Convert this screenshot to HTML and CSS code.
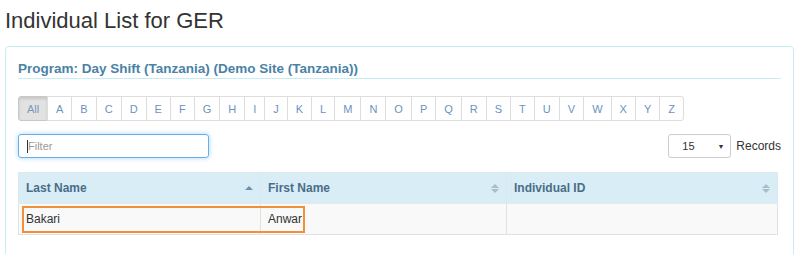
FILE: index.html
```html
<!DOCTYPE html>
<html>
<head>
<meta charset="utf-8">
<link rel="stylesheet" href="styles.css">
</head>
<body>
<div class="page">
  <h1 class="title">Individual List for GER</h1>
  <div class="panel">
    <h2 class="program">Program: Day Shift (Tanzania) (Demo Site (Tanzania))</h2>
    <div class="alpha">
      <span class="letter active">All</span><span class="letter">A</span><span class="letter">B</span><span class="letter">C</span><span class="letter">D</span><span class="letter">E</span><span class="letter">F</span><span class="letter">G</span><span class="letter">H</span><span class="letter">I</span><span class="letter">J</span><span class="letter">K</span><span class="letter">L</span><span class="letter">M</span><span class="letter">N</span><span class="letter">O</span><span class="letter">P</span><span class="letter">Q</span><span class="letter">R</span><span class="letter">S</span><span class="letter">T</span><span class="letter">U</span><span class="letter">V</span><span class="letter">W</span><span class="letter">X</span><span class="letter">Y</span><span class="letter">Z</span>
    </div>
    <div class="controls">
      <div class="filter"><span class="caret"></span><span class="placeholder">Filter</span></div>
      <div class="records">
        <div class="select"><span>15</span><span class="arrow">&#9660;</span></div>
        <span class="rec-label">Records</span>
      </div>
    </div>
    <div class="table-wrap">
      <table class="grid">
        <thead>
          <tr>
            <th class="c1"><div class="th-in"><span>Last Name</span><span class="sort-asc"></span></div></th>
            <th class="c2"><div class="th-in"><span>First Name</span><span class="sort-both"><i class="up"></i><i class="down"></i></span></div></th>
            <th class="c3"><div class="th-in"><span>Individual ID</span><span class="sort-both"><i class="up"></i><i class="down"></i></span></div></th>
          </tr>
        </thead>
        <tbody>
          <tr>
            <td>Bakari</td>
            <td>Anwar</td>
            <td></td>
          </tr>
        </tbody>
      </table>
      <div class="highlight"></div>
    </div>
  </div>
</div>
</body>
</html>
```

FILE: styles.css
```css
html, body {
  margin: 0;
  padding: 0;
  background: #ffffff;
  font-family: "Liberation Sans", Arial, sans-serif;
  color: #333333;
}

.page {
  padding: 0 6px 0 5px;
}

.title {
  margin: 8px 0 12px 0;
  font-size: 22px;
  line-height: 26px;
  font-weight: normal;
  color: #333333;
}

.panel {
  border: 1px solid #c6ecf4;
  border-radius: 4px;
  padding: 13px 12px 30px 12px;
  height: 220px;
  box-sizing: border-box;
}

.program {
  margin: 0;
  font-size: 13.5px;
  line-height: 17px;
  font-weight: bold;
  color: #4a82a6;
  padding-bottom: 1px;
  border-bottom: 1px solid #c6ecf4;
}

.alpha {
  margin-top: 17px;
  display: flex;
  height: 25px;
}

.letter {
  display: flex;
  align-items: center;
  justify-content: center;
  padding: 0 8px;
  min-width: 7px;
  height: 25px;
  box-sizing: border-box;
  border: 1px solid #dddddd;
  margin-left: -1px;
  font-size: 11px;
  color: #6b93bf;
  background: #ffffff;
}

.letter:first-child {
  margin-left: 0;
  border-radius: 3px 0 0 3px;
}

.letter:last-child {
  border-radius: 0 3px 3px 0;
}

.letter.active {
  background: #e2e2e2;
  border-color: #c8c8c8;
  box-shadow: inset 0 2px 3px rgba(0, 0, 0, 0.12);
  color: #7b97b8;
  padding: 0 6px;
  width: 30px;
}

.controls {
  margin-top: 13px;
  display: flex;
  justify-content: space-between;
  align-items: center;
  height: 24px;
}

.filter {
  width: 191px;
  height: 24px;
  box-sizing: border-box;
  border: 1px solid #66afe9;
  border-radius: 3px;
  box-shadow: 0 0 5px rgba(102, 175, 233, 0.55);
  display: flex;
  align-items: center;
  padding-left: 8px;
  font-size: 11px;
}

.caret {
  width: 1px;
  height: 13px;
  background: #333333;
}

.placeholder {
  color: #9a9a9a;
}

.records {
  display: flex;
  align-items: center;
  margin-right: 0;
}

.select {
  width: 63px;
  height: 24px;
  box-sizing: border-box;
  border: 1px solid #cccccc;
  border-radius: 3px;
  display: flex;
  align-items: center;
  justify-content: space-between;
  padding: 0 6px 0 13px;
  font-size: 11px;
  color: #333333;
}

.arrow {
  font-size: 7px;
  color: #333333;
}

.rec-label {
  margin-left: 5px;
  font-size: 12px;
  color: #333333;
}

.table-wrap {
  position: relative;
  margin-top: 14px;
  width: 759px;
}

.grid {
  border-collapse: collapse;
  width: 759px;
  table-layout: fixed;
  font-size: 12px;
}

.grid th, .grid td {
  border: 1px solid #e2e2e2;
  height: 31px;
  box-sizing: border-box;
  padding: 0 7px;
  text-align: left;
  vertical-align: middle;
}

.grid th {
  background: #d9edf7;
  color: #4a6d88;
  font-weight: bold;
  border-color: #dce7ee;
  border-bottom-color: #e4e9ec;
}

.grid th .th-in {
  display: flex;
  justify-content: space-between;
  align-items: center;
  height: 22px;
}

.grid td {
  background: #f9f9f9;
  color: #333333;
}

.c1 { width: 242px; }
.c2 { width: 246px; }
.c3 { width: 271px; }

.sort-asc {
  width: 0;
  height: 0;
  border-left: 4px solid transparent;
  border-right: 4px solid transparent;
  border-bottom: 4px solid #6e90a8;
}

.sort-both {
  display: flex;
  flex-direction: column;
  gap: 1px;
}

.sort-both i {
  display: block;
  width: 0;
  height: 0;
  border-left: 4px solid transparent;
  border-right: 4px solid transparent;
}

.sort-both .up {
  border-bottom: 4px solid #a8bccb;
}

.sort-both .down {
  border-top: 4px solid #a8bccb;
}

.highlight {
  position: absolute;
  left: 4px;
  top: 34px;
  width: 283px;
  height: 27px;
  box-sizing: border-box;
  border: 2px solid #f0913a;
}
```
